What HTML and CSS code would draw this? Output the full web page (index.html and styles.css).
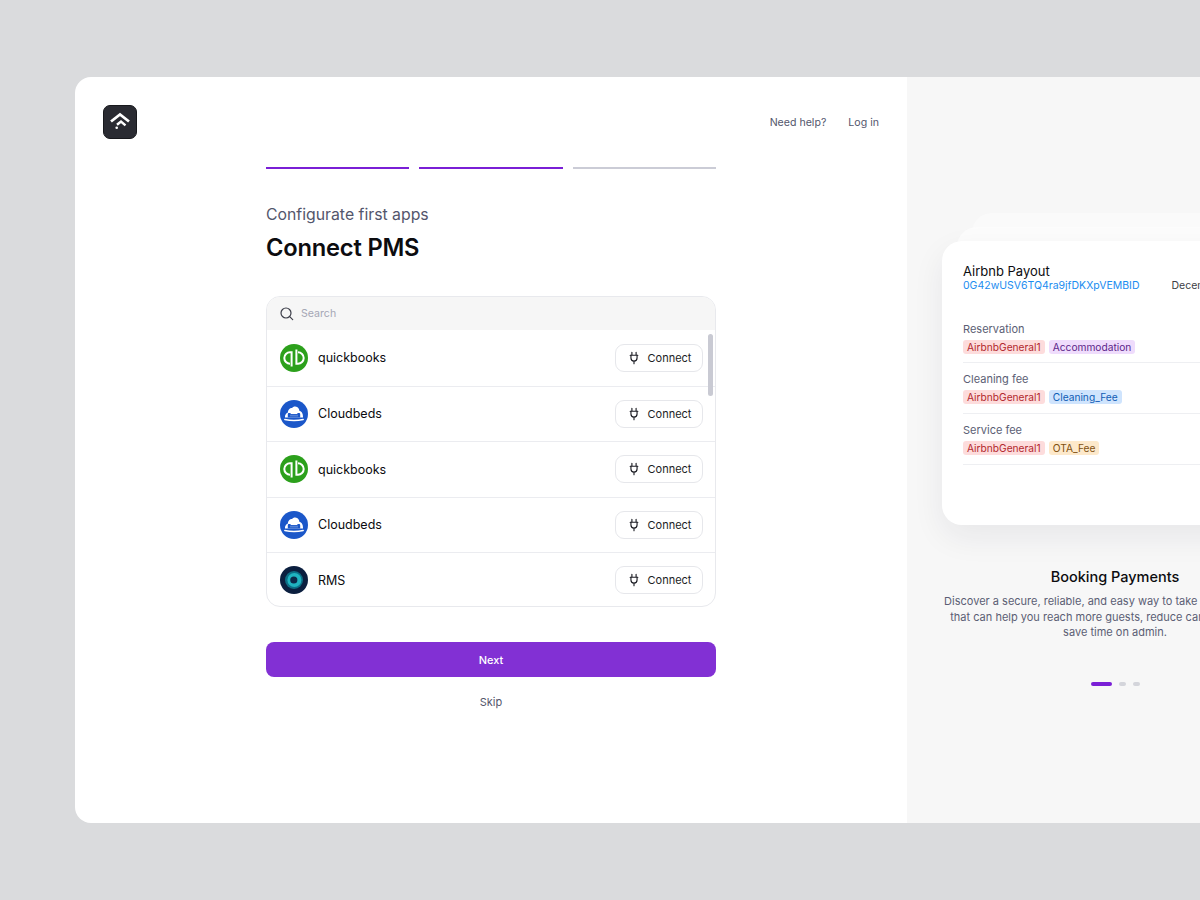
FILE: index.html
```html
<!DOCTYPE html>
<html lang="en">
<head>
  <title>Connect PMS</title>
  <meta charset="utf-8">
  <link rel="stylesheet" href="styles.css">
</head>
<body>
  <svg class="sprites" width="0" height="0">
    <symbol id="icon_plug" viewBox="0 0 16 16">
      <path d="M5.600 1.500v3.200M10.400 1.500v3.200M3.600 4.800h8.800M4.500 4.800v3.200a3.500 3.500 0 0 0 7 0V4.800M8 11.500v3" fill="none" stroke="currentColor" stroke-width="1.300" stroke-linecap="round" stroke-linejoin="round"/>
    </symbol>
    <symbol id="logo_qb" viewBox="0 0 28 28">
      <circle cx="14" cy="14" r="14" fill="#2ca01c"/>
      <path d="M10 19.700a5.700 5.700 0 0 1 0-11.400h1.600v14.200M18 8.300a5.700 5.700 0 0 1 0 11.400h-1.600V5.500" fill="none" stroke="#fff" stroke-width="2"/>
    </symbol>
    <symbol id="logo_cb" viewBox="0 0 28 28">
      <circle cx="14" cy="14" r="14" fill="#1b57c9"/>
      <path d="M5 17.500c-.3-2.500 1-4.300 2.700-4.800C8 9.500 10 7.800 12 8c.9-1.500 3.500-2.300 5.500-.8 1.300 1 1.800 2.300 1.800 3.500 2.200.4 3.900 2.800 3.700 6.800z" fill="#fff"/>
      <path d="M7.800 17.500v-3.200c0-.7.500-1.200 1.200-1.200h.9c.5 0 .9.300 1 .8h6.200c.1-.5.500-.8 1-.8h.9c.7 0 1.200.5 1.200 1.200v3.200z" fill="#1b57c9"/>
      <path d="M10 14.800h8v1.700h-8z" fill="#fff" opacity="0.25"/>
      <path d="M4.800 19.500c5.500 1.200 12.900 1.200 18.400 0" fill="none" stroke="#fff" stroke-width="1.500" stroke-linecap="round"/>
    </symbol>
    <symbol id="logo_rms" viewBox="0 0 28 28">
      <circle cx="14" cy="14" r="14" fill="#0b1f3f"/>
      <circle cx="14" cy="14" r="9" fill="#0c6f86"/>
      <circle cx="14.400" cy="14" r="7" fill="#1fb3c0"/>
      <circle cx="13.800" cy="14" r="3.600" fill="#0b2a4a"/>
    </symbol>
  </svg>

  <div class="shell">
    <div class="main_panel">
      <div class="top_bar">
        <div class="logo">
          <svg width="22" height="22" viewBox="0 0 22 22">
            <path d="M2 10.500L11 3.500l9 7" fill="none" stroke="#fff" stroke-width="2.800"/>
            <path d="M8 13.800l4-3.300 4.500 3.800" fill="none" stroke="#fff" stroke-width="2.400"/>
            <circle cx="7.700" cy="16.700" r="1.300" fill="#fff"/>
          </svg>
        </div>
        <div class="top_links">
          <a>Need help?</a>
          <a>Log in</a>
        </div>
      </div>

      <div class="content">
        <div class="progress">
          <span class="step done"></span>
          <span class="step done"></span>
          <span class="step"></span>
        </div>

        <h2 class="subtitle">Configurate first apps</h2>
        <h1 class="title">Connect PMS</h1>

        <div class="app_list">
          <div class="search">
            <svg width="14" height="14" viewBox="0 0 14 14">
              <circle cx="6" cy="6" r="5" fill="none" stroke="#3d3f4a" stroke-width="1.200"/>
              <path d="M9.700 9.700l3 3" stroke="#3d3f4a" stroke-width="1.200" stroke-linecap="round"/>
            </svg>
            <span>Search</span>
          </div>
          <div class="app_row">
            <svg class="app_logo"><use href="#logo_qb"/></svg>
            <span class="app_name">quickbooks</span>
            <button class="connect"><svg width="14" height="14"><use href="#icon_plug"/></svg>Connect</button>
          </div>
          <div class="app_row">
            <svg class="app_logo"><use href="#logo_cb"/></svg>
            <span class="app_name">Cloudbeds</span>
            <button class="connect"><svg width="14" height="14"><use href="#icon_plug"/></svg>Connect</button>
          </div>
          <div class="app_row">
            <svg class="app_logo"><use href="#logo_qb"/></svg>
            <span class="app_name">quickbooks</span>
            <button class="connect"><svg width="14" height="14"><use href="#icon_plug"/></svg>Connect</button>
          </div>
          <div class="app_row">
            <svg class="app_logo"><use href="#logo_cb"/></svg>
            <span class="app_name">Cloudbeds</span>
            <button class="connect"><svg width="14" height="14"><use href="#icon_plug"/></svg>Connect</button>
          </div>
          <div class="app_row">
            <svg class="app_logo"><use href="#logo_rms"/></svg>
            <span class="app_name">RMS</span>
            <button class="connect"><svg width="14" height="14"><use href="#icon_plug"/></svg>Connect</button>
          </div>
          <div class="scroll_thumb"></div>
        </div>

        <button class="next">Next</button>
        <a class="skip">Skip</a>
      </div>
    </div>

    <div class="side_panel">
      <div class="card_stack">
        <div class="back_card far"></div>
        <div class="back_card near"></div>
        <div class="payout_card">
          <div class="payout_title">Airbnb Payout</div>
          <div class="payout_meta">
            <span class="payout_id">0G42wUSV6TQ4ra9jfDKXpVEMBID</span>
            <span class="payout_date">December 2023</span>
          </div>
          <div class="fee first">
            <div class="fee_name">Reservation</div>
            <div class="tags"><span class="tag red">AirbnbGeneral1</span><span class="tag purple">Accommodation</span></div>
          </div>
          <div class="fee">
            <div class="fee_name">Cleaning fee</div>
            <div class="tags"><span class="tag red">AirbnbGeneral1</span><span class="tag blue">Cleaning_Fee</span></div>
          </div>
          <div class="fee">
            <div class="fee_name">Service fee</div>
            <div class="tags"><span class="tag red">AirbnbGeneral1</span><span class="tag orange">OTA_Fee</span></div>
          </div>
        </div>
      </div>

      <h3 class="side_title">Booking Payments</h3>
      <p class="side_text">Discover a secure, reliable, and easy way to take payments online<br>that can help you reach more guests, reduce cancellations, and<br>save time on admin.</p>

      <div class="dots">
        <span class="dot active"></span>
        <span class="dot"></span>
        <span class="dot"></span>
      </div>
    </div>
  </div>
</body>
</html>
```

FILE: styles.css
```css
*, ::before, ::after {
  box-sizing: border-box;
  margin: 0; padding: 0;
}

html, body {
  height: 100%;
  overflow: hidden;
}
body {
  background: #dadbdd;
  font-family: Inter, "Liberation Sans", sans-serif;
  color: #0c0c0f;
}
.sprites {
  display: block;
  height: 0;
}

.shell {
  display: flex;
  width: 1248px; height: 746px;
  margin: 77px 0 0 75px;
  border-radius: 16px;
  overflow: hidden;
}

/* left side */
.main_panel {
  width: 832px;
  background: white;
}
.top_bar {
  display: flex;
  justify-content: space-between;
  padding: 28px 28px 0;
}
.logo {
  display: flex;
  align-items: center; justify-content: center;
  width: 34px; height: 34px;
  background: #2a2b32;
  border: 1px solid #17181c;
  border-radius: 7px;
}
.top_links {
  display: flex;
  align-items: center;
  gap: 22px;
  font-size: 10.600px;
  color: #53566c;
}

.content {
  width: 450px;
  margin: 28px auto 0;
}
.progress {
  display: flex;
  gap: 10px;
}
.step {
  flex: 1;
  height: 2px;
  background: #cbccd6;
}
.step.done {
  background: #7a1fd6;
}
.subtitle {
  margin-top: 36px;
  font-size: 15.800px; font-weight: 400; line-height: 20px;
  color: #53566c;
}
.title {
  margin-top: 8px;
  font-size: 23.700px; font-weight: 600; line-height: 30px;
  letter-spacing: -0.2px;
}

.app_list {
  position: relative;
  height: 311px;
  margin-top: 33px;
  border: 1px solid #e8e9ed;
  border-radius: 14px;
  overflow: hidden;
}
.search {
  display: flex;
  align-items: center;
  gap: 7px;
  height: 33px;
  padding: 0 13px;
  background: #f6f6f6;
  font-size: 10.600px;
  color: #a5a7b5;
}
.app_row {
  display: flex;
  align-items: center;
  height: 55.500px;
  padding: 0 12px 0 13px;
  border-top: 1px solid #ebecf0;
}
.search + .app_row {
  border-top: 0;
}
.app_logo {
  width: 28px; height: 28px;
  flex: none;
}
.app_name {
  flex: 1;
  margin-left: 10px;
  font-size: 12.500px;
}
.connect {
  display: flex;
  align-items: center; justify-content: center;
  gap: 7px;
  width: 88px; height: 28px;
  border: 1px solid #e6e7eb;
  border-radius: 9px;
  background: white;
  font: 400 11px Inter, "Liberation Sans", sans-serif;
  color: #1c1d24;
}
.scroll_thumb {
  position: absolute;
  top: 37px; right: 2px;
  width: 5px; height: 62px;
  background: #c9cad3;
  border-radius: 3px;
}

.next {
  display: block;
  width: 100%; height: 35px;
  margin-top: 35px;
  border: 0;
  border-radius: 8px;
  background: #8230d4;
  font: 500 11px Inter, "Liberation Sans", sans-serif;
  color: white;
}
.skip {
  display: block;
  margin-top: 18px;
  text-align: center;
  font-size: 11px; line-height: 14px;
  color: #53566c;
}

/* right side, wider than the window so it gets cut off */
.side_panel {
  width: 416px;
  padding-top: 164px;
  background: #f7f7f7;
  text-align: center;
}
.card_stack {
  position: relative;
  width: 346px; height: 284px;
  margin: 0 auto;
  text-align: left;
}
.back_card {
  position: absolute;
  background: #fafafa;
  border-radius: 20px;
}
.back_card.far {
  top: -28px; left: 30px; right: -30px; bottom: 28px;
}
.back_card.near {
  top: -14px; left: 15px; right: -15px; bottom: 14px;
  background: #fcfcfc;
}
.payout_card {
  position: absolute;
  inset: 0;
  padding: 22px 21px 0;
  background: white;
  border-radius: 20px;
  box-shadow: 0 12px 32px rgba(30, 30, 50, 0.07);
}
.payout_title {
  font-size: 13px; line-height: 16px;
}
.payout_meta {
  display: flex;
  gap: 32px;
  font-size: 10.500px; line-height: 14px;
  white-space: nowrap;
}
.payout_id {
  color: #1a8cf0;
}
.payout_date {
  color: #3c3d44;
}
.fee {
  height: 51px;
  padding-top: 9px;
  border-bottom: 1px solid #eeeff2;
}
.fee.first {
  height: 41px;
  margin-top: 29px;
  padding-top: 0;
}
.fee_name {
  font-size: 11px; line-height: 14px;
  color: #5b5e74;
}
.tags {
  display: flex;
  gap: 4px;
  margin-top: 4px;
}
.tag {
  padding: 0 4px;
  border-radius: 3px;
  font-size: 10.200px; line-height: 14px;
}
.tag.red {
  background: #fddcdc;
  color: #b3282d;
}
.tag.purple {
  background: #efdcfc;
  color: #5c1f8a;
}
.tag.blue {
  background: #cfe4fd;
  color: #0f5cb5;
}
.tag.orange {
  background: #fde9cb;
  color: #80500f;
}

.side_title {
  margin-top: 42px;
  font-size: 14.500px; font-weight: 500; line-height: 20px;
}
.side_text {
  margin-top: 7px;
  font-size: 11px; line-height: 15.500px;
  color: #5b5e74;
  white-space: nowrap;
}
.dots {
  display: flex;
  justify-content: center;
  gap: 7px;
  margin-top: 41px;
}
.dot {
  width: 7px; height: 4px;
  background: #d4d5db;
  border-radius: 2px;
}
.dot.active {
  width: 21px;
  background: #7a1fd6;
}
```
